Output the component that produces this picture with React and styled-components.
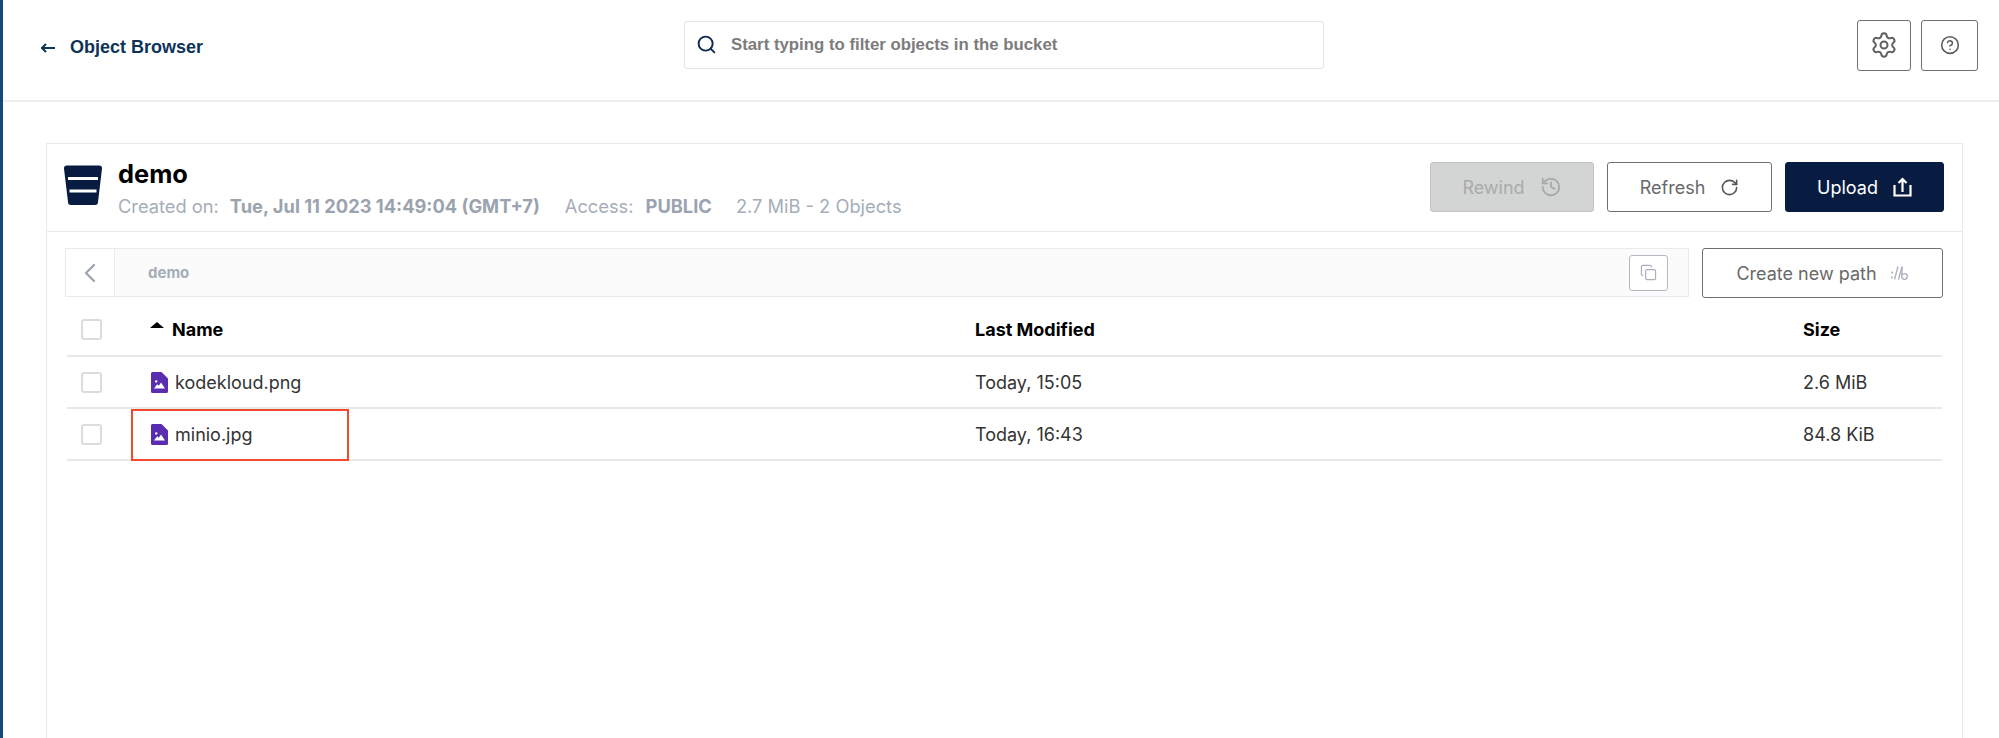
import React from "react";
import styled, { createGlobalStyle } from "styled-components";
import { Settings, CircleHelp, History, RotateCw, Copy, ChevronLeft, Search } from "lucide-react";

const Global = createGlobalStyle`
  html, body { margin: 0; padding: 0; background: #fff; }
  body { font-family: Inter, "Liberation Sans", sans-serif; overflow: hidden; }
  * { box-sizing: border-box; }
`;

const Page = styled.div`
  width: 1999px; height: 738px; border-left: 3px solid #12497c;
  display: flex; flex-direction: column; overflow: hidden; background: #fff;
`;
const TopBar = styled.header`
  height: 102px; flex: none; display: flex; align-items: center;
  border-bottom: 2px solid #eeeeee; padding: 0 21px 3px 38px;
`;
const BackLink = styled.div`
  width: 643px; display: flex; align-items: center; gap: 15px; margin-top: -2px;
  font: 700 18px "Liberation Sans", sans-serif; color: #0e3358;
`;
const SearchBox = styled.div`
  width: 640px; height: 48px; border: 1px solid #e4e4e4; border-radius: 3px;
  display: flex; align-items: center; gap: 14px; padding: 0 11px; margin-top: -8px;
  font: 700 16.8px "Liberation Sans", sans-serif; color: #7c7c7c;
`;
const TopActions = styled.div`margin-left: auto; display: flex; gap: 10px; margin-top: -7px;`;
const IconButton = styled.button`
  width: ${p => p.$w}px; height: 51px; padding: 0; background: #fff; color: #5f5f5f;
  border: 1.5px solid #6f6f6f; border-radius: 3px; display: flex; align-items: center; justify-content: center;
`;
const Main = styled.main`flex: 1; min-height: 0; padding: 41px 36px 0 43px;`;
const Card = styled.section`
  position: relative; height: 100%; border: 1px solid #eaeaea; border-bottom: none;
`;
const CardHead = styled.div`
  height: 88px; display: flex; justify-content: space-between; padding: 18px 18px 0 17px;
  border-bottom: 1px solid #eaeaea;
`;
const Identity = styled.div`display: flex; gap: 16px;`;
const BucketMark = styled.svg`width: 38px; height: 40px; margin-top: 3px; flex: none;`;
const TitleBlock = styled.div`display: flex; flex-direction: column; margin-top: -3px;`;
const Title = styled.h1`margin: 0; font: 700 25.4px/29px Inter, sans-serif; color: #000;`;
const Meta = styled.div`
  display: flex; margin-top: 7px; font: 400 18.3px/22px Inter, sans-serif; color: #a5adb8;
`;
const MetaLabel = styled.span`margin-right: ${p => p.$gap}px;`;
const MetaValue = styled.b`font-weight: 700; color: #9ba3af; margin-right: ${p => p.$gap}px;`;
const ButtonRow = styled.div`display: flex; gap: 13px;`;
const ActionButton = styled.button`
  width: ${p => p.$w}px; height: 50px; border-radius: 3px; display: flex; align-items: center;
  justify-content: center; gap: 15px; font: 400 18px Inter, sans-serif; padding: 0;
  background: ${p => p.$variant === "primary" ? "#081c42" : p.$variant === "disabled" ? "#d3d5d4" : "#fff"};
  color: ${p => p.$variant === "primary" ? "#fff" : p.$variant === "disabled" ? "#a8abaa" : "#696969"};
  border: 1.5px solid ${p => p.$variant === "primary" ? "#081c42" : p.$variant === "disabled" ? "#c3c5c4" : "#6f6f6f"};
`;
const PathRow = styled.div`display: flex; gap: 13px; padding: 16px 19px 0 18px;`;
const Breadcrumb = styled.div`
  flex: 1; height: 49px; display: flex; align-items: center; background: #fbfbfb;
  border: 1px solid #eaeaea;
`;
const BackCell = styled.div`
  width: 49px; height: 100%; border-right: 1px solid #eaeaea; background: #fff; color: #9aa3af;
  display: flex; align-items: center; justify-content: center;
`;
const Crumb = styled.span`flex: 1; padding-left: 33px; font: 700 15px Inter, sans-serif; color: #a5adb8;`;
const CopyButton = styled.div`
  width: 39px; height: 36px; margin-right: 20px; border: 1.5px solid #b3bac4; border-radius: 3px;
  display: flex; align-items: center; justify-content: center; color: #a9b0ba; background: #fff;
`;
const CreateButton = styled(ActionButton)`gap: 14px;`;
const Table = styled.div`margin: 0 20px;`;
const Row = styled.div`
  display: grid; grid-template-columns: 83px 825px 828px 1fr; align-items: center;
  height: ${p => p.$h}px; border-bottom: 2px solid #e9e9e9; padding-top: ${p => p.$pad}px;
  font: ${p => p.$head ? 700 : 400} 18px Inter, sans-serif; color: ${p => p.$head ? "#000" : "#333"};
`;
const Check = styled.span`
  display: block; width: 21px; height: 21px; margin-left: 14px; border: 2px solid #dcdcdc; border-radius: 3px; background: #fff;
`;
const NameCell = styled.div`
  display: flex; align-items: center; gap: ${p => p.$gap}px; padding-left: ${p => p.$indent}px;
`;
const Caret = styled.span`
  width: 0; height: 0; margin-top: -9px; border-left: 7px solid transparent; border-right: 7px solid transparent;
  border-bottom: 6px solid #000;
`;
const FileName = styled.span``;
const Highlight = styled.div`
  position: absolute; left: 84px; top: 265px; width: 218px; height: 52px;
  border: 2px solid #f2492b; pointer-events: none;
`;

const FileIcon = () => (
  <svg width="17" height="21" viewBox="0 0 17 21">
    <path fill="#5a2db0" d="M1.5 0H10.5L17 6.5V19.5a1.5 1.5 0 0 1-1.5 1.5H1.5A1.5 1.5 0 0 1 0 19.5V1.5A1.5 1.5 0 0 1 1.5 0Z" />
    <path fill="#fff" d="M3 16.5L6.2 12.3L7.8 13.8L10 10.5L14 16.5Z" />
    <circle cx="5.2" cy="9.4" r="1.2" fill="#fff" />
  </svg>
);

const files = [
  { name: "kodekloud.png", date: "Today, 15:05", size: "2.6 MiB" },
  { name: "minio.jpg", date: "Today, 16:43", size: "84.8 KiB" },
];

export default function App() {
  return (
    <Page>
      <Global />
      <TopBar>
        <BackLink>
          <svg width="14" height="10" viewBox="0 0 14 10"><path d="M5 1 1 5l4 4M1 5h13" fill="none" stroke="#0e3358" strokeWidth="2" /></svg>
          Object Browser
        </BackLink>
        <SearchBox>
          <Search size={21} color="#0f2a52" strokeWidth={2.2} />
          Start typing to filter objects in the bucket
        </SearchBox>
        <TopActions>
          <IconButton $w={54}><Settings size={28} strokeWidth={1.7} /></IconButton>
          <IconButton $w={57}><CircleHelp size={20} strokeWidth={1.9} /></IconButton>
        </TopActions>
      </TopBar>
      <Main>
        <Card>
          <CardHead>
            <Identity>
              <BucketMark viewBox="0 0 38 40">
                <path fill="#081c42" d="M3 0.5H35a3 3 0 0 1 3 3.2L34 37a3 3 0 0 1-3 3H7a3 3 0 0 1-3-3L0 3.7A3 3 0 0 1 3 0.5Z" />
                <rect x="4" y="12" width="30" height="3" fill="#fff" />
                <rect x="5.5" y="24.5" width="27" height="3" fill="#fff" />
              </BucketMark>
              <TitleBlock>
                <Title>demo</Title>
                <Meta>
                  <MetaLabel $gap={11}>Created on:</MetaLabel>
                  <MetaValue $gap={25}>Tue, Jul 11 2023 14:49:04 (GMT+7)</MetaValue>
                  <MetaLabel $gap={12}>Access:</MetaLabel>
                  <MetaValue $gap={24}>PUBLIC</MetaValue>
                  <span>2.7 MiB - 2 Objects</span>
                </Meta>
              </TitleBlock>
            </Identity>
            <ButtonRow>
              <ActionButton $w={164} $variant="disabled">Rewind <History size={22} strokeWidth={2} /></ActionButton>
              <ActionButton $w={165}>Refresh <RotateCw size={19} strokeWidth={2} color="#555" /></ActionButton>
              <ActionButton $w={159} $variant="primary">
                Upload
                <svg width="19" height="20" viewBox="0 0 19 20" fill="none" stroke="#fff" strokeWidth="2.2">
                  <path d="M1.5 8v10.5h16V8M9.5 15V2M5.5 6l4-4 4 4" />
                </svg>
              </ActionButton>
            </ButtonRow>
          </CardHead>
          <PathRow>
            <Breadcrumb>
              <BackCell><ChevronLeft size={32} strokeWidth={1.7} /></BackCell>
              <Crumb>demo</Crumb>
              <CopyButton><Copy size={17} strokeWidth={1.7} /></CopyButton>
            </Breadcrumb>
            <CreateButton $w={241}>
              Create new path
              <svg width="18" height="16" viewBox="0 0 18 16" fill="none" stroke="#a9b0ba" strokeWidth="1.3">
                <path d="M7 1.5 3.5 14.5M11 1.5 7.5 14.5" />
                <path d="M1 7.5h.1M.7 12.5h.1" strokeWidth="2" strokeLinecap="round" />
                <circle cx="13.5" cy="11.5" r="2.8" />
                <path d="M11.2 2 10.8 10" />
              </svg>
            </CreateButton>
          </PathRow>
          <Table>
            <Row $head $h={59} $pad={5}>
              <Check />
              <NameCell $gap={8} $indent={0}><Caret /><span>Name</span></NameCell>
              <span>Last Modified</span>
              <span>Size</span>
            </Row>
            {files.map(f => (
              <Row key={f.name} $h={52} $pad={0}>
                <Check />
                <NameCell $gap={7} $indent={1}><FileIcon /><FileName>{f.name}</FileName></NameCell>
                <span>{f.date}</span>
                <span>{f.size}</span>
              </Row>
            ))}
          </Table>
          <Highlight />
        </Card>
      </Main>
    </Page>
  );
}
